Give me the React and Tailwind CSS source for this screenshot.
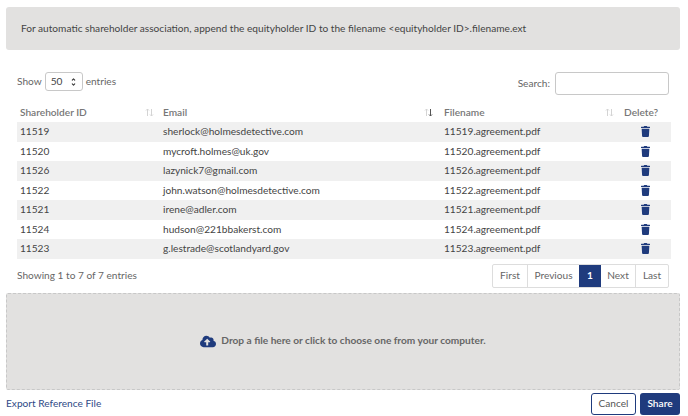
import React from 'react';
import { ChevronUp, ChevronDown } from 'lucide-react';

const rows = [
    ['11519', 'sherlock@holmesdetective.com'],
    ['11520', 'mycroft.holmes@uk.gov'],
    ['11526', 'lazynick7@gmail.com'],
    ['11522', 'john.watson@holmesdetective.com'],
    ['11521', 'irene@adler.com'],
    ['11524', 'hudson@221bbakerst.com'],
    ['11523', 'g.lestrade@scotlandyard.gov'],
];

function SortIcon({ active }) {
    return (
        <svg width="9" height="9" viewBox="0 0 9 9" fill="none" strokeWidth="1">
            <path d="M2.5 8V1M1 2.5 2.5 1 4 2.5" stroke="#d4d4d4" />
            <path d="M6.5 1v7M5 6.5 6.5 8 8 6.5" stroke={active ? '#555555' : '#d4d4d4'} />
        </svg>
    );
}

function Trash() {
    return (
        <svg width="9" height="11" viewBox="0 0 448 512" fill="#1f3b7d" preserveAspectRatio="none">
            <path d="M432 32H312l-9.4-18.7A24 24 0 0 0 281.1 0H166.8a23.7 23.7 0 0 0-21.4 13.3L136 32H16A16 16 0 0 0 0 48v32a16 16 0 0 0 16 16h416a16 16 0 0 0 16-16V48a16 16 0 0 0-16-16zM53.2 467a48 48 0 0 0 47.9 45h245.8a48 48 0 0 0 47.9-45L416 128H32z" />
        </svg>
    );
}

function CloudUpload() {
    return (
        <svg width="16" height="13" viewBox="0 0 640 512" fill="#1f3b7d" preserveAspectRatio="none">
            <path d="M537.6 226.6c4.1-10.7 6.4-22.4 6.4-34.6 0-53-43-96-96-96-19.7 0-38.1 6-53.3 16.2C367 64.2 315.3 32 256 32c-88.4 0-160 71.6-160 160 0 2.7.1 5.4.2 8.1C40.2 219.8 0 273.2 0 336c0 79.5 64.5 144 144 144h368c70.7 0 128-57.3 128-128 0-61.9-44-113.6-102.4-125.4zM393.4 288H328v112c0 8.8-7.2 16-16 16h-48c-8.8 0-16-7.2-16-16V288h-65.4c-14.3 0-21.4-17.2-11.3-27.3l105.4-105.4c6.2-6.2 16.4-6.2 22.6 0l105.4 105.4c10.1 10.1 2.9 27.3-11.3 27.3z" />
        </svg>
    );
}

export default function App() {
    return (
        <div className="w-[688px] h-[416px] overflow-hidden bg-white pt-[7px] px-[6px] text-[10.15px] text-[#555555]" style={{ fontFamily: 'Lato, "Open Sans", sans-serif' }}>
            {/* Aviso */}
            <div className="w-[674px] h-[43px] rounded-[3px] bg-[#e2e1e0] flex items-center pl-[15px] text-[#444444]">
                For automatic shareholder association, append the equityholder ID to the filename &lt;equityholder ID&gt;.filename.ext
            </div>

            <div className="pl-[11px] pr-[11px]">
                {/* Controles */}
                <div className="mt-[22px] mr-[2px] h-[23px] flex items-start justify-between text-[#666666]">
                    <div className="flex items-center gap-[3px]">
                        <span>Show</span>
                        <div className="w-[38px] h-[19px] border border-[#c8c8c8] rounded-[3px] flex items-center justify-between pl-[5px] pr-[6px] text-[#444444]">
                            50
                            <span className="flex flex-col text-[#333333]">
                                <ChevronUp size={5} strokeWidth={5} />
                                <ChevronDown size={5} strokeWidth={5} />
                            </span>
                        </div>
                        <span>entries</span>
                    </div>
                    <div className="flex items-center gap-[5px]">
                        <span>Search:</span>
                        <div className="w-[114px] h-[23px] border border-[#c8c8c8] rounded-[3px]" />
                    </div>
                </div>

                {/* Tabla */}
                <table className="mt-[8px] w-[654px] table-fixed border-collapse">
                    <thead>
                        <tr className="h-[19px] text-[#777777]">
                            <th className="w-[146px] pl-[3px] pr-[9px] text-left font-semibold">
                                <div className="flex items-center justify-between">Shareholder ID <SortIcon /></div>
                            </th>
                            <th className="w-[281px] pr-[11px] text-left font-semibold">
                                <div className="flex items-center justify-between">Email <SortIcon active /></div>
                            </th>
                            <th className="w-[180px] pr-[10px] text-left font-semibold">
                                <div className="flex items-center justify-between">Filename <SortIcon /></div>
                            </th>
                            <th className="pr-[13px] text-center font-semibold">Delete?</th>
                        </tr>
                    </thead>
                    <tbody className="text-[#444444]">
                        {rows.map(([id, email], i) => (
                            <tr key={id} className={`h-[19.5px] ${i % 2 === 0 ? 'bg-[#f0f0f0]' : 'bg-white'}`}>
                                <td className="pl-[3px]">{id}</td>
                                <td>{email}</td>
                                <td>{id}.agreement.pdf</td>
                                <td className="pr-[4px]">
                                    <div className="flex justify-center"><Trash /></div>
                                </td>
                            </tr>
                        ))}
                    </tbody>
                </table>

                {/* Paginacion */}
                <div className="mt-[5px] mr-[2px] h-[24px] flex items-center justify-between">
                    <span className="text-[#666666]">Showing 1 to 7 of 7 entries</span>
                    <div className="flex h-[24px] border border-[#dddddd] rounded-[2px] text-[#666666]">
                        <span className="w-[34px] flex items-center justify-center">First</span>
                        <span className="w-[52px] flex items-center justify-center border-l border-[#dddddd]">Previous</span>
                        <span className="w-[22px] flex items-center justify-center bg-[#1f3b7d] text-white font-bold">1</span>
                        <span className="w-[35px] flex items-center justify-center border-r border-[#dddddd]">Next</span>
                        <span className="w-[32px] flex items-center justify-center">Last</span>
                    </div>
                </div>
            </div>

            {/* Zona de carga */}
            <div className="mt-[5px] w-[674px] h-[97px] bg-[#e2e1e0] border border-dashed border-[#c8c8c8] rounded-[2px] flex items-center justify-center gap-[5px] text-[#666666] font-bold">
                <CloudUpload />
                Drop a file here or click to choose one from your computer.
            </div>

            {/* Footer */}
            <div className="mt-[3px] mr-[2px] flex items-center justify-between">
                <span className="text-[#2f4a86]">Export Reference File</span>
                <div className="flex gap-[4px]">
                    <span className="w-[45px] h-[22px] border border-[#1f3b7d] rounded-[3px] flex items-center justify-center text-[#555555]">Cancel</span>
                    <span className="w-[40px] h-[22px] bg-[#1f3b7d] rounded-[3px] flex items-center justify-center text-white font-semibold">Share</span>
                </div>
            </div>
        </div>
    );
}
